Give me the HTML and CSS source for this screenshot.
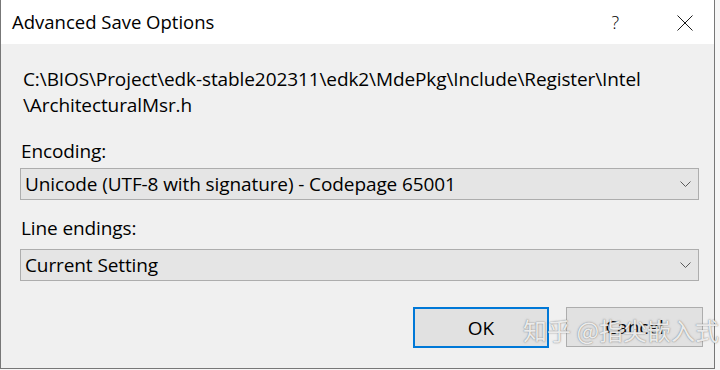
FILE: index.html
```html
<!DOCTYPE html>
<html lang="en">
<head>
  <meta charset="UTF-8" />
  <title>Advanced Save Options</title>
  <link rel="stylesheet" href="styles.css">
</head>
<body>
  <!-- Ventana de diálogo -->
  <div class="dialog">
    <div class="titlebar">
      <span class="title">Advanced Save Options</span>
      <span class="help">?</span>
      <svg class="close" width="16" height="16" viewBox="0 0 16 16">
        <path d="M0.5 0.5 L15.5 15.5 M15.5 0.5 L0.5 15.5" stroke="#1a1a1a" stroke-width="1" fill="none" />
      </svg>
    </div>

    <div class="dialog-body">
      <p class="path">C:\BIOS\Project\edk-stable202311\edk2\MdePkg\Include\Register\Intel<br />\ArchitecturalMsr.h</p>

      <label class="field-label">Encoding:</label>
      <div class="select select-encoding">
        <span>Unicode (UTF-8 with signature) - Codepage 65001</span>
        <svg class="chevron" width="11" height="6" viewBox="0 0 11 6">
          <path d="M0.5 0.5 L5.5 5.5 L10.5 0.5" stroke="#5a5a5a" stroke-width="1" fill="none" />
        </svg>
      </div>

      <label class="field-label label-endings">Line endings:</label>
      <div class="select">
        <span>Current Setting</span>
        <svg class="chevron" width="11" height="6" viewBox="0 0 11 6">
          <path d="M0.5 0.5 L5.5 5.5 L10.5 0.5" stroke="#5a5a5a" stroke-width="1" fill="none" />
        </svg>
      </div>

      <div class="btn-actions">
        <button type="button" class="btn btn-ok">OK</button>
        <button type="button" class="btn">Cancel</button>
      </div>
    </div>
  </div>

  <!-- Marca de agua encima -->
  <div class="watermark">知乎 @指尖嵌入式</div>
</body>
</html>
```

FILE: styles.css
```css
:root {
  --color-title-bg: #fff;
  --color-body-bg: #f0f0f0;
  --color-control: #e5e5e5;
  --color-control-border: #adadad;
  --color-accent: #0078d7;
  --font-ui: "Open Sans", "Noto Sans", sans-serif;
}

* {
  margin: 0;
  padding: 0;
  box-sizing: border-box;
}

body {
  background-color: #f6f6f6;
  font-family: var(--font-ui);
  color: #000;
  width: 720px;
  height: 370px;
  overflow: hidden;
  position: relative;
}

.dialog {
  width: 715px;
  border: 1px solid #777;
  border-top: none;
  background-color: var(--color-body-bg);
}

/* Barra de título */
.titlebar {
  height: 44px;
  background-color: var(--color-title-bg);
  display: flex;
  align-items: center;
  padding-left: 11px;
}

.title {
  font-size: 18.5px;
  flex: 1;
  margin-top: -1px;
}

.help {
  font-size: 18px;
  font-weight: 300;
  margin-right: 58px;
  margin-top: -1px;
}

.close {
  margin-right: 21px;
  margin-top: 1px;
}

/* Contenido */
.dialog-body {
  padding: 22px 11px 20px 19px;
}

.path {
  font-size: 19px;
  line-height: 26px;
  letter-spacing: -0.1px;
  margin-left: 3px;
}

.field-label {
  display: block;
  font-size: 19px;
  line-height: 24px;
  letter-spacing: -0.1px;
  margin: 21px 0 5px 1px;
}

.label-endings {
  margin-top: 16px;
  margin-bottom: 9px;
}

.select {
  height: 32px;
  margin-right: 4px;
  background-color: var(--color-control);
  border: 1px solid var(--color-control-border);
  display: flex;
  align-items: center;
  justify-content: space-between;
  padding: 0 6px 0 4px;
  font-size: 19px;
  letter-spacing: -0.1px;
}

.chevron {
  margin-right: 1px;
}

/* Botones */
.btn-actions {
  display: flex;
  justify-content: flex-end;
  gap: 17px;
  margin-top: 26px;
}

.btn {
  width: 137px;
  height: 40px;
  background-color: #e1e1e1;
  border: 1px solid var(--color-control-border);
  font-family: var(--font-ui);
  font-size: 19px;
  color: #000;
}

.btn-ok {
  width: 136px;
  height: 41px;
  border: 2px solid var(--color-accent);
}

.watermark {
  position: absolute;
  left: 523px;
  top: 312px;
  font-family: "Noto Sans CJK SC", sans-serif;
  font-size: 24px;
  color: rgba(255, 255, 255, 0.85);
  text-shadow: 0 0 1px rgba(90, 90, 90, 0.7), 0 0 2px rgba(120, 120, 120, 0.5);
  white-space: nowrap;
}
```
